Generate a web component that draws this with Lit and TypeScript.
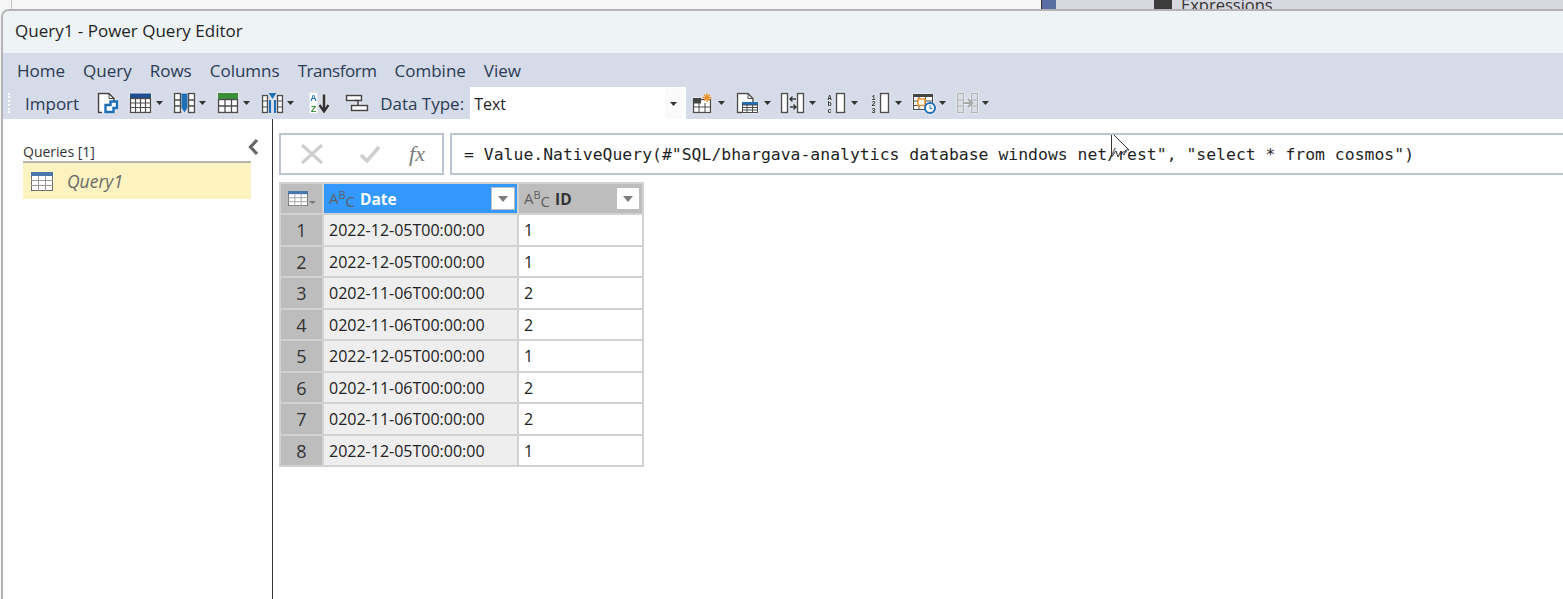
import { LitElement, html, css, svg } from "lit";
import { customElement } from "lit/decorators.js";

const rows: [string, string][] = [
  ["2022-12-05T00:00:00", "1"],
  ["2022-12-05T00:00:00", "1"],
  ["0202-11-06T00:00:00", "2"],
  ["0202-11-06T00:00:00", "2"],
  ["2022-12-05T00:00:00", "1"],
  ["0202-11-06T00:00:00", "2"],
  ["0202-11-06T00:00:00", "2"],
  ["2022-12-05T00:00:00", "1"],
];

const ic = (w: number, body: unknown) =>
  html`<svg class="ic" width=${w} height="22" viewBox="0 0 ${w} 22">${body}</svg>`;
const caret = html`<svg class="caret" width="7" height="4" viewBox="0 0 7 4"><path d="M0 0h7L3.500 4z" fill="#333"/></svg>`;
const G = "#4d4d4d", B = "#1f6fb5", N = "#1d4f91";

const icons = {
  importDoc: ic(23, svg`<path d="M6 20.500H2.500V1.500H13l5 5v3" fill="#fff" stroke="#444" stroke-width="1.500"/><path d="M13 1.500v5h5" fill="none" stroke="#444"/><path d="M9.500 20v-7h5V9.500H21V16h-3.500v4z" fill="#fff" stroke="${B}" stroke-width="2.400"/>`),
  table: ic(24, svg`<rect x="1" y="1.500" width="21" height="5" fill="${N}"/><rect x="1.500" y="6.500" width="20" height="14" fill="#fff" stroke="${G}" stroke-width="1.300"/><path d="M1 11h21M1 15.500h21M6.500 7v13M11.500 7v13M16.500 7v13" stroke="${G}" stroke-width="1.200"/>`),
  columnSel: ic(23, svg`<rect x="1.500" y="1.500" width="6" height="19" fill="#fff" stroke="${G}" stroke-width="1.400"/><rect x="15.500" y="1.500" width="6" height="19" fill="#fff" stroke="${G}" stroke-width="1.400"/><path d="M1 8h7M1 14h7M15 8h7M15 14h7" stroke="${G}" stroke-width="1.300"/><path d="M8.500 1.500h6V16l-3 4.500-3-4.500z" fill="${B}"/>`),
  rowsGreen: ic(23, svg`<rect x="1" y="1" width="20" height="6" fill="#3f8f3a"/><rect x="1.500" y="7.500" width="19" height="13" fill="#fff" stroke="${G}" stroke-width="1.400"/><path d="M1 14h20M8 8v12M14.500 8v12" stroke="${G}" stroke-width="1.300"/>`),
  columnsBlue: ic(23, svg`<rect x="1.500" y="3.500" width="5" height="17" fill="#fff" stroke="${G}" stroke-width="1.400"/><rect x="16.500" y="3.500" width="5" height="17" fill="#fff" stroke="${G}" stroke-width="1.400"/><path d="M1 9h6M1 15h6M16 9h6M16 15h6" stroke="${G}" stroke-width="1.200"/><path d="M9 8v13M14 8v13" stroke="${B}" stroke-width="2.200"/><path d="M7.500 1h8L11.500 7z" fill="${B}"/>`),
  sortAz: ic(22, svg`<rect x="1" y="1" width="7" height="9.500" fill="#fff"/><rect x="1" y="11.500" width="7" height="9.500" fill="#fff"/><text x="4.500" y="9" text-anchor="middle" class="azt" fill="${B}">A</text><text x="4.500" y="19.500" text-anchor="middle" class="azt" fill="#3f8f3a">Z</text><path d="M15 2.500v16" stroke="#333" stroke-width="2.600"/><path d="M10.500 13l4.500 6.500 4.500-6.500" fill="none" stroke="#333" stroke-width="2.400"/>`),
  group: ic(24, svg`<path d="M1.500 3.500h15v5h-15z" fill="#fff" stroke="#444" stroke-width="1.500"/><path d="M6.500 13.500h16v5h-16z" fill="#fff" stroke="#444" stroke-width="1.500"/><path d="M10 8.500h3v5" fill="none" stroke="#444" stroke-width="1.500"/>`),
  addCol: ic(23, svg`<rect x="1.500" y="7.500" width="17" height="13" fill="#fff" stroke="${G}" stroke-width="1.300"/><rect x="1" y="6" width="8" height="5.500" fill="#444"/><path d="M1 15h18M7 7v13M13 11v9" stroke="${G}"/><path d="M15 1v9M10.500 5.500h9M12 2.500l6 6M18 2.500l-6 6" stroke="#e8912d" stroke-width="1.400"/>`),
  pageTable: ic(25, svg`<path d="M6 20.500H1.500V1.500H12l5 5v4" fill="#fff" stroke="${G}" stroke-width="1.400"/><path d="M12 1.500v5h5" fill="none" stroke="${G}"/><rect x="6" y="10" width="16" height="3.500" fill="${B}"/><rect x="6.500" y="13" width="15" height="7.500" fill="#fff" stroke="${G}"/><path d="M6 15.500h16M6 18h16M11 13v7M16.500 13v7" stroke="${G}"/>`),
  merge: ic(26, svg`<rect x="1.500" y="1.500" width="6" height="19" fill="#fff" stroke="${G}" stroke-width="1.400"/><rect x="17.500" y="1.500" width="6" height="19" fill="#fff" stroke="${G}" stroke-width="1.400"/><path d="M16 7H10M12.500 4.500L10 7l2.500 2.500M10 15h6M13.500 12.500L16 15l-2.500 2.500" fill="none" stroke="#333" stroke-width="1.400"/>`),
  abcCol: ic(22, svg`<text x="3.500" y="7.500" text-anchor="middle" class="azs">A</text><text x="3.500" y="14" text-anchor="middle" class="azs">b</text><text x="3.500" y="20.500" text-anchor="middle" class="azs">c</text><rect x="10.500" y="1.500" width="8" height="19" fill="#fff" stroke="${G}" stroke-width="1.400"/>`),
  numCol: ic(22, svg`<text x="3.500" y="7.500" text-anchor="middle" class="azs">1</text><text x="3.500" y="14" text-anchor="middle" class="azs">2</text><text x="3.500" y="20.500" text-anchor="middle" class="azs">3</text><rect x="10.500" y="1.500" width="8" height="19" fill="#fff" stroke="${G}" stroke-width="1.400"/>`),
  dateTable: ic(24, svg`<rect x="1.500" y="2.500" width="19" height="15" fill="#fff" stroke="${G}"/><rect x="1" y="2" width="20" height="3" fill="#444"/><path d="M1 9h20M1 13.500h20M7 5v12M13.500 5v12" stroke="${G}"/><rect x="6" y="7" width="7" height="6.500" fill="#fff" stroke="#e8912d" stroke-width="1.500"/><circle cx="18" cy="16" r="5" fill="#fff" stroke="${B}" stroke-width="2"/><path d="M18 13v3.300h2.500" fill="none" stroke="${B}"/>`),
  disabled: ic(23, svg`<g stroke="#b5b5b5" fill="#d9dde6"><rect x="1.500" y="1.500" width="6" height="19"/><rect x="15.500" y="1.500" width="6" height="19"/><path d="M1 8h7M1 14h7M15 8h7M15 14h7" fill="none"/></g><path d="M7 11h8M12 7l4 4-4 4" fill="none" stroke="#a8a8a8" stroke-width="2.200"/>`),
};

const tableMini = (w: number, h: number) => html`<svg width=${w} height=${h} viewBox="0 0 22 19" preserveAspectRatio="none"><rect x=".5" y=".5" width="21" height="18" fill="#fff" stroke="#6e6e6e"/><rect width="22" height="4" fill="#4a76ac"/><path d="M0 8.500h22M0 13.500h22M7.500 4v15M14.500 4v15" stroke="#9a9a9a"/></svg>`;

const abc = html`<span class="abc"><span>A</span><span class="b">B</span><span class="c">C</span></span>`;
const filter = html`<span class="filter"><svg width="10" height="6" viewBox="0 0 10 6"><path d="M0 0h10L5 6z" fill="#7d7d7d"/></svg></span>`;

@customElement("app-root")
export class AppRoot extends LitElement {
  static styles = css`
    :host { display: block; width: 1563px; height: 599px; overflow: hidden; background: #f6f6f6; font-family: "Open Sans", "Noto Sans", sans-serif; color: #222; }
    .under { height: 9px; display: flex; overflow: hidden; }
    .under .left { width: 1041px; box-sizing: border-box; padding-left: 11px; }
    .under .tick { display: block; width: 1px; height: 9px; background: #c4c4c4; }
    .under .swatch { width: 14px; background: #5a6ea3; border-left: 1px solid #333; }
    .under .mid { flex: 1; background: #d7d7e0; display: flex; align-items: flex-end; padding-left: 98px; gap: 9px; font-size: 16.500px; line-height: 16px; color: #333; }
    .under .box { width: 18px; height: 9px; background: #3c3c3c; flex: none; }
    .under .txt { margin-bottom: -4px; }
    .window { height: 590px; border-top: 2px solid #b3b3b3; border-left: 2px solid #b3b3b3; border-top-left-radius: 8px; margin-left: 1px; display: flex; flex-direction: column; box-sizing: border-box; overflow: hidden; background: #fff; }
    .title { height: 42px; flex: none; background: #eef4f6; display: flex; align-items: center; padding: 0 0 4px 12px; box-sizing: border-box; font-size: 17px; color: #1f1f1f; }
    .menu { height: 34px; flex: none; background: #d5dbe8; display: flex; align-items: center; padding-left: 14px; gap: 18px; font-size: 17px; color: #2b3a55; }
    .tight { letter-spacing: -0.45px; }
    .tools { height: 32px; flex: none; background: #d5dbe8; display: flex; align-items: center; padding-left: 5px; font-size: 17px; color: #2b3a55; }
    .grip { width: 2px; height: 20px; border-left: 2px dotted #fff; margin-right: 13px; }
    .import { margin-right: 17px; }
    .tool { display: inline-flex; align-items: center; gap: 3px; flex: none; }
    .w33 { width: 33px; } .w35 { width: 35px; } .w36 { width: 36px; } .w42 { width: 42px; } .w44 { width: 44px; } .w46 { width: 46px; } .w48 { width: 48px; }
    .ic { display: block; flex: none; filter: drop-shadow(0 0 1px #fff); }
    .caret { display: block; flex: none; }
    .azt { font: bold 9px "Liberation Sans", sans-serif; }
    .azs { font: bold 7px "Liberation Mono", monospace; fill: #333; }
    .combo { width: 216px; height: 32px; margin: 0 6px; background: #fff; display: flex; align-items: center; justify-content: space-between; padding: 1px 0 0 4px; box-sizing: border-box; color: #1f1f1f; font-size: 16px; }
    .combo .arrow { width: 17px; height: 31px; background: #fafafa; display: flex; align-items: center; justify-content: center; margin-right: 4px; }
    .main { flex: 1; display: flex; min-height: 0; }
    .side { flex: none; box-sizing: border-box; border-right: 1px solid #333; padding: 21px 21px 0 20px; width: 270px; }
    .qhead { display: flex; justify-content: space-between; align-items: flex-end; height: 21px; border-bottom: 2px solid #b3b3b3; font-size: 14px; color: #333; line-height: 18px; position: relative; }
    .qhead svg { position: absolute; right: -10px; top: -2px; }
    .qitem { height: 36px; background: #fdf3c0; display: flex; align-items: center; gap: 14px; padding-left: 8px; font-style: italic; font-size: 17.500px; color: #6a6a6a; box-sizing: border-box; }
    .content { flex: 1; padding: 14px 0 0 6px; min-width: 0; }
    .fbar { display: flex; gap: 6px; height: 42px; }
    .fbtns { width: 165px; flex: none; box-sizing: border-box; border: 2px solid #bdc5d4; display: flex; align-items: center; justify-content: space-between; padding: 0 17px 0 19px; }
    .chk { margin-left: 6px; }
    .fx { font: italic 22px "Liberation Serif", serif; color: #7a7a7a; }
    .finput { flex: 1; border: 2px solid #bdc5d4; border-right: none; display: flex; align-items: center; padding: 1px 0 0 12px; font: 16.440px "DejaVu Sans Mono", monospace; color: #1f1f1f; white-space: pre; overflow: hidden; }
    .cursor-wrap { position: relative; }
    .cursor { position: absolute; left: 659px; top: -3px; pointer-events: none; }
    .grid { margin-top: 7px; display: grid; grid-template-columns: 41px 193px 123px; gap: 2px; background: #d2d2d2; border: 1px solid #d2d2d2; width: max-content; padding: 1px; }
    .corner, .hnum { background: #bdbdbd; display: flex; align-items: center; justify-content: center; }
    .corner { height: 29px; }
    .corner .mini { width: 7px; height: 3px; margin: 8px 0 0 1px; }
    .hd { display: flex; align-items: center; height: 29px; padding: 0 2px 0 5px; font-size: 15.500px; font-weight: 700; box-sizing: border-box; background: #bdbdbd; color: #333; }
    .hd.sel { background: #3399ff; color: #fff; }
    .abc { color: #5e5e5e; font-size: 15px; width: 31px; flex: none; font-weight: 400; display: inline-flex; align-items: baseline; line-height: 1; }
    .abc .b { font-size: 11px; position: relative; top: -5px; }
    .abc .c { position: relative; top: 3px; }
    .hd .name { flex: 1; }
    .filter { width: 24px; height: 23px; background: #fff; box-sizing: border-box; border: 1px solid #bdbdbd; display: flex; align-items: center; justify-content: center; }
    .hnum { font-size: 18px; height: 29.500px; color: #333; padding-top: 1px; box-sizing: border-box; }
    .cell { height: 29.500px; font-size: 16px; display: flex; align-items: center; padding: 1px 0 0 5px; box-sizing: border-box; color: #222; background: #fff; }
    .cell.sel { background: #eeeeee; }
  `;

  render() {
    return html`
      <div class="under">
        <div class="left"><span class="tick"></span></div><div class="swatch"></div>
        <div class="mid"><span class="box"></span><span class="txt">Expressions</span></div>
      </div>
      <div class="window">
        <div class="title">Query1 - Power Query Editor</div>
        <div class="menu"><span>Home</span><span>Query</span><span>Rows</span><span>Columns</span><span class="tight">Transform</span><span>Combine</span><span>View</span></div>
        <div class="tools">
          <span class="grip"></span><span class="import">Import</span>
          <span class="tool w33">${icons.importDoc}</span>
          <span class="tool w44">${icons.table}${caret}</span>
          <span class="tool w44">${icons.columnSel}${caret}</span>
          <span class="tool w44">${icons.rowsGreen}${caret}</span>
          <span class="tool w48">${icons.columnsBlue}${caret}</span>
          <span class="tool w36">${icons.sortAz}</span>
          <span class="tool w35">${icons.group}</span>
          <span>Data Type:</span>
          <span class="combo">Text<span class="arrow">${caret}</span></span>
          <span class="tool w44">${icons.addCol}${caret}</span>
          <span class="tool w44">${icons.pageTable}${caret}</span>
          <span class="tool w46">${icons.merge}${caret}</span>
          <span class="tool w44">${icons.abcCol}${caret}</span>
          <span class="tool w42">${icons.numCol}${caret}</span>
          <span class="tool w44">${icons.dateTable}${caret}</span>
          <span class="tool">${icons.disabled}${caret}</span>
        </div>
        <div class="main">
          <div class="side">
            <div class="qhead"><span>Queries [1]</span>
              <svg width="14" height="18" viewBox="0 0 14 18"><path d="M10 2L3.500 9l6.500 7" fill="none" stroke="#666" stroke-width="3.200"/></svg>
            </div>
            <div class="qitem">${tableMini(22, 19)}<span>Query1</span></div>
          </div>
          <div class="content">
            <div class="fbar">
              <div class="fbtns">
                <svg width="24" height="20" viewBox="0 0 24 20"><path d="M2 1l20 18M22 1L2 19" stroke="#cfcfcf" stroke-width="3.200"/></svg>
                <svg class="chk" width="22" height="18" viewBox="0 0 22 18"><path d="M2 10l6 6L20 2" fill="none" stroke="#cfcfcf" stroke-width="3.600"/></svg>
                <span class="fx">fx</span>
              </div>
              <div class="finput cursor-wrap">= Value.NativeQuery(#"SQL/bhargava-analytics database windows net/rest", "select * from cosmos")<svg class="cursor" width="20" height="30" viewBox="0 0 20 30"><path d="M.5.500V25l4.500-6 2 6 3-6 3 4 2-5h3z" fill="#fff" fill-opacity=".35" stroke="#333"/></svg></div>
            </div>
            <div class="grid">
              <div class="corner">${tableMini(20, 15)}<svg class="mini" viewBox="0 0 7 3"><path d="M0 0h7L3.500 3z" fill="#777"/></svg></div>
              <div class="hd sel">${abc}<span class="name">Date</span>${filter}</div>
              <div class="hd">${abc}<span class="name">ID</span>${filter}</div>
              ${rows.map((r, i) => html`
                <div class="hnum">${i + 1}</div>
                <div class="cell sel">${r[0]}</div>
                <div class="cell">${r[1]}</div>`)}
            </div>
          </div>
        </div>
      </div>`;
  }
}
